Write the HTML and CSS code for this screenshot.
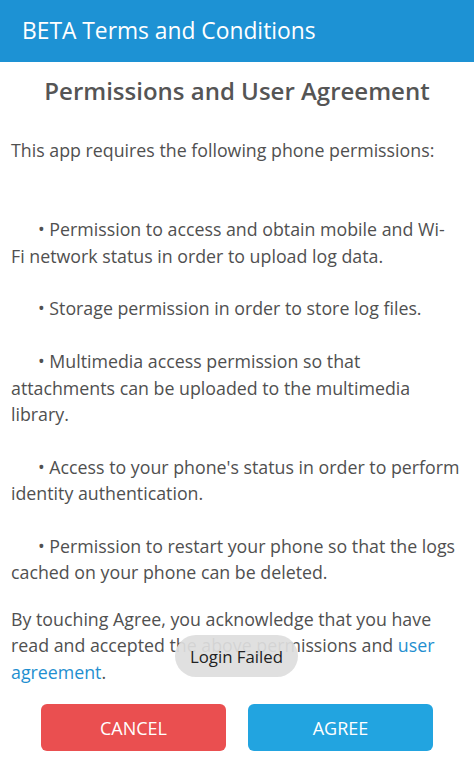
FILE: index.html
```html
<!DOCTYPE html>
<html>
<head>
<meta charset="utf-8">
<link rel="stylesheet" href="styles.css">
</head>
<body>
<header class="appbar">BETA Terms and Conditions</header>
<main class="content">
  <h1 class="heading">Permissions and User Agreement</h1>
  <p class="intro">This app requires the following phone permissions:</p>
  <p class="item">• Permission to access and obtain mobile and Wi-<br>Fi network status in order to upload log data.</p>
  <p class="item">• Storage permission in order to store log files.</p>
  <p class="item">• Multimedia access permission so that attachments can be uploaded to the multimedia library.</p>
  <p class="item">• Access to your phone's status in order to perform identity authentication.</p>
  <p class="item">• Permission to restart your phone so that the logs cached on your phone can be deleted.</p>
  <p class="outro">By touching Agree, you acknowledge that you have read and accepted the above permissions and <a class="link">user agreement</a>.</p>
</main>
<div class="toast">Login Failed</div>
<footer class="actions">
  <button class="btn cancel">CANCEL</button>
  <button class="btn agree">AGREE</button>
</footer>
</body>
</html>
```

FILE: styles.css
```css
html, body {
  margin: 0;
  padding: 0;
  background: #ffffff;
  font-family: "Open Sans", "Noto Sans", sans-serif;
  width: 474px;
  height: 757px;
  overflow: hidden;
  position: relative;
}
.appbar {
  height: 62px;
  background: #1d92d4;
  color: #ffffff;
  font-size: 22.8px;
  line-height: 62px;
  padding-left: 22px;
  box-sizing: border-box;
}
.content {
  padding: 0 11px;
  color: #505050;
  font-size: 17.8px;
  line-height: 26.4px;
}
.heading {
  margin: 12px 0 0;
  text-align: center;
  font-size: 24px;
  font-weight: 600;
  line-height: 34px;
  color: #555555;
}
.intro {
  margin: 29px 0 0;
}
.item {
  margin: 26.4px 0 0;
  text-indent: 27px;
}
.intro + .item {
  margin-top: 52.8px;
}
.outro {
  margin: 20px 0 0;
}
.link {
  color: #1f8fd0;
}
.toast {
  position: absolute;
  left: 175px;
  top: 635px;
  width: 123px;
  height: 42px;
  border-radius: 21px;
  background: rgba(222, 222, 222, 0.93);
  color: #222222;
  font-size: 16.8px;
  display: flex;
  align-items: center;
  justify-content: center;
}
.actions {
  position: absolute;
  left: 0;
  right: 0;
  bottom: 6px;
  display: flex;
  justify-content: center;
  gap: 22px;
}
.btn {
  width: 185px;
  height: 47px;
  border: none;
  border-radius: 6px;
  color: #ffffff;
  font-family: "Open Sans", "Noto Sans", sans-serif;
  font-size: 18px;
}
.cancel { background: #ea4f50; }
.agree { background: #22a4e0; }
```
